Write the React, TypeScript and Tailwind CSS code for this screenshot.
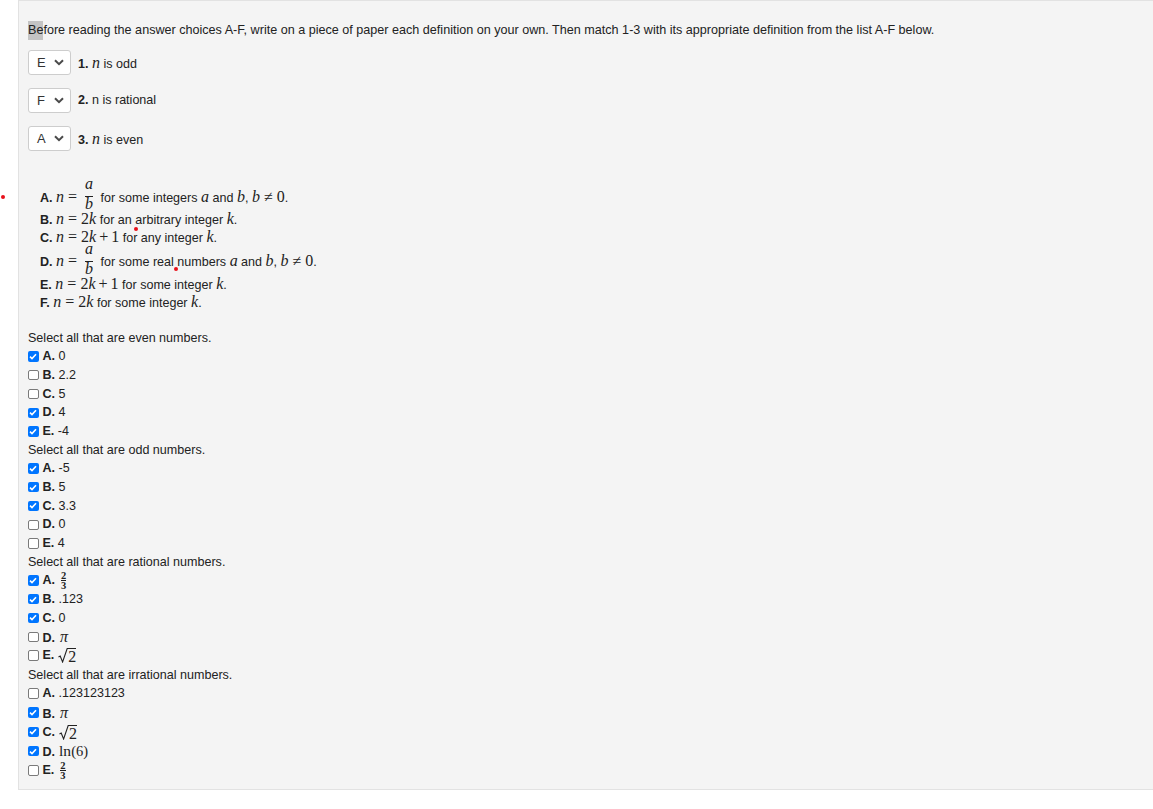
import type { ReactNode } from "react";

const serif = "font-['Liberation_Serif',serif]";

function V({ children }: { children: ReactNode }) {
  return <i className={`${serif} text-[16px] italic`}>{children}</i>;
}

function N({ children }: { children: ReactNode }) {
  return <span className={`${serif} text-[16px]`}>{children}</span>;
}

function Op({ children, gap = "mx-[4px]" }: { children: ReactNode; gap?: string }) {
  return <span className={`${serif} text-[16px] ${gap}`}>{children}</span>;
}

function Frac({ top, bottom }: { top: string; bottom: string }) {
  return (
    <span className="mx-[3px] flex flex-col items-stretch px-[1px] pb-[5px]">
      <i className={`${serif} text-center text-[16px] leading-[8px] italic`}>{top}</i>
      <span className="mt-[8px] mb-[3px] h-px bg-[#222]" />
      <i className={`${serif} text-center text-[16px] leading-[8px] italic`}>{bottom}</i>
    </span>
  );
}

function SmallFrac() {
  return (
    <span className={`${serif} ml-[6px] inline-flex flex-col items-stretch align-middle text-[10.5px] font-bold`}>
      <span className="text-center leading-[8px]">2</span>
      <span className="my-[0.5px] h-px bg-[#222]" />
      <span className="text-center leading-[8px]">3</span>
    </span>
  );
}

function Sqrt2() {
  return (
    <span className="ml-[4px] inline-flex items-stretch align-middle">
      <svg width="10" height="15" viewBox="0 0 10 15" className="shrink-0">
        <path d="M0.5 9 L2.2 8 L4.6 14 L9.2 0.5 L10 0.5" fill="none" stroke="#222" strokeWidth="1.1" />
      </svg>
      <span className={`${serif} border-t border-[#222] pt-px text-[16px] leading-[13px]`}>2</span>
    </span>
  );
}

function Pi() {
  return <i className={`${serif} ml-[5px] text-[16px] italic`}>π</i>;
}

function Chevron() {
  return (
    <svg width="10" height="7" viewBox="0 0 10 7">
      <path d="M1 1.2 L5 5.2 L9 1.2" fill="none" stroke="#4a4a4a" strokeWidth="2" />
    </svg>
  );
}

function Check({ on }: { on: boolean }) {
  if (on) {
    return (
      <span className="flex h-[10.5px] w-[10.5px] items-center justify-center rounded-[2px] bg-[#0075ff]">
        <svg width="8" height="7" viewBox="0 0 8 7">
          <path d="M1 3.6 L3 5.5 L7 1.2" fill="none" stroke="#fff" strokeWidth="1.6" />
        </svg>
      </span>
    );
  }
  return <span className="h-[10.5px] w-[10.5px] rounded-[2px] border border-[#7a7a7a] bg-white" />;
}

type Choice = { key: string; value: ReactNode; on: boolean };

const sections: { title: string; choices: Choice[] }[] = [
  {
    title: "Select all that are even numbers.",
    choices: [
      { key: "A.", value: " 0", on: true },
      { key: "B.", value: " 2.2", on: false },
      { key: "C.", value: " 5", on: false },
      { key: "D.", value: " 4", on: true },
      { key: "E.", value: " -4", on: true },
    ],
  },
  {
    title: "Select all that are odd numbers.",
    choices: [
      { key: "A.", value: " -5", on: true },
      { key: "B.", value: " 5", on: true },
      { key: "C.", value: " 3.3", on: true },
      { key: "D.", value: " 0", on: false },
      { key: "E.", value: " 4", on: false },
    ],
  },
  {
    title: "Select all that are rational numbers.",
    choices: [
      { key: "A.", value: <SmallFrac />, on: true },
      { key: "B.", value: " .123", on: true },
      { key: "C.", value: " 0", on: true },
      { key: "D.", value: <Pi />, on: false },
      { key: "E.", value: <Sqrt2 />, on: false },
    ],
  },
  {
    title: "Select all that are irrational numbers.",
    choices: [
      { key: "A.", value: " .123123123", on: false },
      { key: "B.", value: <Pi />, on: true },
      { key: "C.", value: <Sqrt2 />, on: true },
      {
        key: "D.",
        value: (
          <span className={`${serif} ml-[4px] text-[15.5px]`}>
            ln<span className="text-[14.5px]">(6)</span>
          </span>
        ),
        on: true,
      },
      { key: "E.", value: <SmallFrac />, on: false },
    ],
  },
];

const matches = [
  { pick: "E", label: <><b>1.</b> <V>n</V> is odd</> },
  { pick: "F", label: <><b>2.</b> n is rational</> },
  { pick: "A", label: <><b>3.</b> <V>n</V> is even</> },
];

function FracRow({ letter, words, pad }: { letter: string; words: string; pad: string }) {
  return (
    <div className={`flex h-[28px] items-center ${pad}`}>
      <span className="whitespace-pre">
        <b>{letter}</b> <V>n</V>
        <Op>=</Op>
      </span>
      <Frac top="a" bottom="b" />
      <span className="whitespace-pre">
        {" "}
        {words} <V>a</V> and <V>b</V>, <V>b</V>
        <Op>≠</Op>
        <N>0</N>.
      </span>
    </div>
  );
}

export default function App() {
  return (
    <div className="relative h-[809px] w-[1153px] overflow-hidden bg-white font-['Liberation_Sans',Arial,sans-serif] text-[12.55px] text-[#222]">
      <div className="ml-[18px] box-border h-[790px] w-[1160px] border border-[#e2e2e2] bg-[#f4f4f4] pt-[20px] pl-[9px]">
        <p className="text-[12.6px] leading-[19px]">
          <span className="inline-block bg-[#c4c4c4] leading-[19px]">Be</span>fore reading the answer choices A-F, write on a
          piece of paper each definition on your own. Then match 1-3 with its appropriate definition from the list A-F below.
        </p>

        <div className="mt-[10px] flex flex-col gap-[13px]">
          {matches.map((m) => (
            <div key={m.pick} className="flex h-[25px] items-center">
              <span className="flex h-[25px] w-[43px] items-center justify-between rounded-[3px] border border-[#cdcdcd] bg-white pr-[6px] pl-[8px] text-[13px] text-[#333]">
                {m.pick}
                <Chevron />
              </span>
              <span className="ml-[7px]">{m.label}</span>
            </div>
          ))}
        </div>

        <div className="mt-[31px] ml-[12px]">
          <FracRow letter="A." words="for some integers" pad="pt-px" />
          <div className="flex h-[18px] items-center">
            <span>
              <b>B.</b> <V>n</V>
              <Op>=</Op>
              <N>2</N>
              <V>k</V> for an arbitrary integer <V>k</V>.
            </span>
          </div>
          <div className="flex h-[18px] items-center">
            <span>
              <b>C.</b> <V>n</V>
              <Op>=</Op>
              <N>2</N>
              <V>k</V>
              <Op gap="mx-[3px]">+</Op>
              <N>1</N> for any integer <V>k</V>.
            </span>
          </div>
          <FracRow letter="D." words="for some real numbers" pad="pt-[2px]" />
          <div className="flex h-[18px] items-center pt-px">
            <span>
              <b>E.</b> <V>n</V>
              <Op>=</Op>
              <N>2</N>
              <V>k</V>
              <Op gap="mx-[3px]">+</Op>
              <N>1</N> for some integer <V>k</V>.
            </span>
          </div>
          <div className="flex h-[18px] items-center pt-px">
            <span>
              <b>F.</b> <V>n</V>
              <Op>=</Op>
              <N>2</N>
              <V>k</V> for some integer <V>k</V>.
            </span>
          </div>
        </div>

        <div className="mt-[19px]">
          {sections.map((s, i) => (
            <div key={s.title}>
              <div className={`flex items-center ${i === 3 ? "h-[19px] pt-[2px]" : "h-[18px]"}`}>{s.title}</div>
              {s.choices.map((c) => (
                <div key={c.key} className={`flex items-center ${i === 3 ? "h-[19.2px]" : "h-[18.8px]"}`}>
                  <Check on={c.on} />
                  <span className="ml-[4px] whitespace-pre">
                    <b>{c.key}</b>
                    {c.value}
                  </span>
                </div>
              ))}
            </div>
          ))}
        </div>
      </div>

      <span className="absolute top-[195px] left-[1px] h-[4px] w-[4px] rounded-full bg-[#e8101a]" />
      <span className="absolute top-[227px] left-[134px] h-[3.5px] w-[3.5px] rounded-full bg-[#e8101a]" />
      <span className="absolute top-[267px] left-[174px] h-[3.5px] w-[3.5px] rounded-full bg-[#e8101a]" />
    </div>
  );
}
